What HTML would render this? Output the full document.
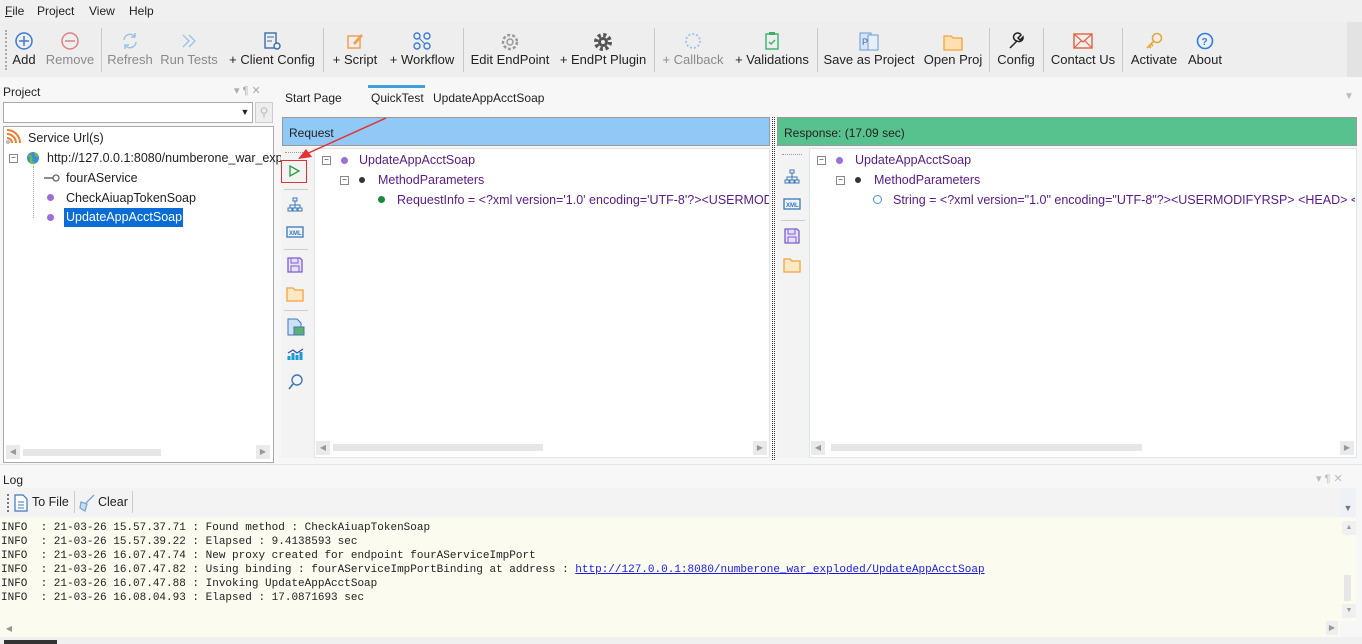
<!DOCTYPE html>
<html><head><meta charset="utf-8"><style>
*{box-sizing:border-box;margin:0;padding:0}
body{width:1362px;height:644px;overflow:hidden;background:#f7f7f7;font-family:"Liberation Sans",sans-serif;font-size:12px;color:#222;position:relative}
.a{position:absolute;white-space:nowrap}
.menu{left:0;top:0;width:1362px;height:22px;background:#f0f0f0}
.tb{left:0;top:22px;width:1347px;height:55px;background:#eeeeee}
.lbl{font-size:13px;top:52px;transform:translateX(-50%)}
.dis{color:#8a8a8a}
.sep{top:28px;width:1px;height:44px;background:#c8c8c8}
.ic{top:31px;transform:translateX(-50%)}
.mono{font-family:"Liberation Mono",monospace;font-size:11px;color:#222;white-space:pre}
.sb{background:#e6e6e6}
.arr{width:14px;height:14px;background:#eaeaea;color:#999;font-size:8px;text-align:center;line-height:14px}
.side-sep{height:1px;background:#ccc;width:24px}
</style></head><body>
<div class="a menu"></div>
<div class="a" style="left:5px;top:4px;font-size:12px"><u>F</u>ile</div>
<div class="a" style="left:37px;top:4px">Project</div>
<div class="a" style="left:89px;top:4px">View</div>
<div class="a" style="left:129px;top:4px">Help</div>

<div class="a tb"></div>
<div class="a" style="left:1347px;top:22px;width:15px;height:55px;background:#e3e3e3"></div>
<div class="a" style="left:5px;top:30px;width:2px;height:40px;border-left:2px dotted #aaa"></div>
<svg class="a ic" style="left:24px" width="20" height="20"><circle cx="10" cy="10" r="8" fill="none" stroke="#3a7bd5" stroke-width="1.5"/><path d="M10 5v10M5 10h10" stroke="#3a7bd5" stroke-width="1.5"/></svg>
<svg class="a ic" style="left:70px" width="20" height="20"><circle cx="10" cy="10" r="8" fill="none" stroke="#d9534f" stroke-width="1.5" opacity=".7"/><path d="M5 10h10" stroke="#d9534f" stroke-width="1.5" opacity=".7"/></svg>
<svg class="a ic" style="left:130px" width="20" height="20"><path d="M4 9a6 6 0 0 1 11-3M16 11a6 6 0 0 1-11 3M15 2v4h-4M5 18v-4h4" fill="none" stroke="#9cc1e8" stroke-width="1.5"/></svg>
<svg class="a ic" style="left:189px" width="20" height="20"><path d="M4 4l6 6-6 6M10 4l6 6-6 6" fill="none" stroke="#9cc1e8" stroke-width="1.4"/></svg>
<svg class="a ic" style="left:272px" width="20" height="20"><rect x="3" y="2" width="11" height="15" fill="none" stroke="#3b6ea5" stroke-width="1.4"/><path d="M5 6h7M5 10h5" stroke="#3b6ea5"/><circle cx="15" cy="15" r="3" fill="#eee" stroke="#3b6ea5" stroke-width="1.4"/></svg>
<svg class="a ic" style="left:355px" width="20" height="20"><rect x="3" y="5" width="12" height="12" fill="none" stroke="#f0a050" stroke-width="1.5"/><path d="M8 12l8-9 2 2-8 9z" fill="#f0a050"/></svg>
<svg class="a ic" style="left:422px" width="20" height="20"><circle cx="5" cy="5" r="3" fill="none" stroke="#3a7bd5" stroke-width="1.4"/><circle cx="15" cy="5" r="3" fill="none" stroke="#3a7bd5" stroke-width="1.4"/><circle cx="5" cy="15" r="3" fill="none" stroke="#3a7bd5" stroke-width="1.4"/><circle cx="15" cy="15" r="3" fill="none" stroke="#3a7bd5" stroke-width="1.4"/><path d="M7 7l6 6" stroke="#3a7bd5"/></svg>
<svg class="a ic" style="left:510px" width="22" height="22"><circle cx="11" cy="11" r="7" fill="none" stroke="#999" stroke-width="2.5" stroke-dasharray="3 2"/><circle cx="11" cy="11" r="3" fill="none" stroke="#999" stroke-width="1.5"/></svg>
<svg class="a ic" style="left:603px" width="22" height="22"><circle cx="11" cy="11" r="7" fill="none" stroke="#555" stroke-width="4" stroke-dasharray="3 2.5"/><circle cx="11" cy="11" r="5" fill="#555"/><circle cx="11" cy="11" r="2" fill="#eee"/></svg>
<svg class="a ic" style="left:693px" width="20" height="20"><circle cx="10" cy="10" r="7" fill="none" stroke="#9cc1e8" stroke-width="1.8" stroke-dasharray="2 2"/></svg>
<svg class="a ic" style="left:772px" width="20" height="20"><rect x="4" y="3" width="12" height="15" fill="none" stroke="#3cae6a" stroke-width="1.4"/><rect x="7" y="1" width="6" height="3" fill="#3cae6a"/><path d="M7 11l2 2 4-4" fill="none" stroke="#3cae6a" stroke-width="1.4"/></svg>
<svg class="a ic" style="left:869px" width="22" height="22"><rect x="2" y="2" width="11" height="17" fill="#d6e6f7" stroke="#6c9bd2"/><rect x="10" y="4" width="10" height="15" fill="#e6f0fa" stroke="#6c9bd2"/><text x="4" y="14" font-size="9" fill="#3a6bb5" font-family="Liberation Sans">P</text></svg>
<svg class="a ic" style="left:953px" width="22" height="22"><path d="M2 5h7l2 2h9v12H2z" fill="#fde0b0" stroke="#f5a23c" stroke-width="1.3"/></svg>
<svg class="a ic" style="left:1016px" width="20" height="20"><path d="M4 17l7-7M11 10a4 4 0 1 1 4 -6l-3 3 2 2 3-3a4 4 0 0 1-6 4z" fill="none" stroke="#222" stroke-width="1.5"/></svg>
<svg class="a ic" style="left:1083px" width="22" height="20"><rect x="2" y="3" width="18" height="14" fill="none" stroke="#e8603c" stroke-width="1.4"/><path d="M2 3l9 8 9-8M2 17l7-7M20 17l-7-7" fill="none" stroke="#e8603c" stroke-width="1.2"/></svg>
<svg class="a ic" style="left:1154px" width="20" height="20"><circle cx="13" cy="7" r="4.5" fill="none" stroke="#e6a63a" stroke-width="1.6"/><path d="M10 10l-7 7M5 15l2 2M7 13l2 2" stroke="#e6a63a" stroke-width="1.6"/></svg>
<svg class="a ic" style="left:1205px" width="20" height="20"><circle cx="10" cy="10" r="7.5" fill="none" stroke="#2b7de1" stroke-width="1.6"/><text x="6.5" y="14" font-size="10" font-weight="bold" fill="#2b7de1" font-family="Liberation Sans">?</text></svg>
<div class="a lbl" style="left:24px">Add</div>
<div class="a lbl dis" style="left:70px">Remove</div>
<div class="a sep" style="left:101px"></div>
<div class="a lbl dis" style="left:130px">Refresh</div>
<div class="a lbl dis" style="left:189px">Run Tests</div>
<div class="a lbl" style="left:272px">+ Client Config</div>
<div class="a sep" style="left:323px"></div>
<div class="a lbl" style="left:355px">+ Script</div>
<div class="a lbl" style="left:422px">+ Workflow</div>
<div class="a sep" style="left:463px"></div>
<div class="a lbl" style="left:510px">Edit EndPoint</div>
<div class="a lbl" style="left:603px">+ EndPt Plugin</div>
<div class="a sep" style="left:654px"></div>
<div class="a lbl dis" style="left:693px">+ Callback</div>
<div class="a lbl" style="left:772px">+ Validations</div>
<div class="a sep" style="left:817px"></div>
<div class="a lbl" style="left:869px">Save as Project</div>
<div class="a lbl" style="left:953px">Open Proj</div>
<div class="a sep" style="left:989px"></div>
<div class="a lbl" style="left:1016px">Config</div>
<div class="a sep" style="left:1043px"></div>
<div class="a lbl" style="left:1083px">Contact Us</div>
<div class="a sep" style="left:1122px"></div>
<div class="a lbl" style="left:1154px">Activate</div>
<div class="a lbl" style="left:1205px">About</div>

<div class="a" style="left:3px;top:85px;font-size:12px">Project</div>
<div class="a" style="left:234px;top:84px;color:#aaa;font-size:11px">▾ ¶ ✕</div>
<div class="a" style="left:3px;top:102px;width:250px;height:21px;background:#fff;border:1px solid #aaa"></div>
<div class="a" style="left:238px;top:103px;width:14px;height:19px;font-size:9px;line-height:19px;text-align:center">▼</div>
<div class="a" style="left:255px;top:102px;width:18px;height:21px;background:#eee;border:1px solid #ccc;color:#bbb;text-align:center;line-height:19px">⚲</div>
<div class="a" style="left:3px;top:126px;width:271px;height:337px;background:#fff;border:1px solid #aaa"></div>
<svg class="a" style="left:5px;top:129px" width="16" height="16"><path d="M2 9a5 5 0 0 1 5 5M2 5a9 9 0 0 1 9 9M2 1a13 13 0 0 1 13 13" fill="none" stroke="#f07d2a" stroke-width="2"/><circle cx="3" cy="13" r="2" fill="#bbb"/></svg>
<div class="a" style="left:28px;top:131px;font-size:12.5px">Service Url(s)</div>
<div class="a" style="left:9px;top:154px;width:9px;height:9px;border:1px solid #888;background:#fff;font-size:8px;line-height:6px;text-align:center">−</div>
<svg class="a" style="left:26px;top:151px" width="14" height="14"><circle cx="7" cy="7" r="6" fill="#3a8fd8"/><path d="M3 4q3 2 2 5t3 3M9 2q1 3 3 3" stroke="#6bbf3a" stroke-width="2.5" fill="none"/></svg>
<div class="a" style="left:47px;top:151px;font-size:12.5px">http://127.0.0.1:8080/numberone_war_expl</div>
<div class="a" style="left:33px;top:166px;width:1px;height:52px;border-left:1px dotted #aaa"></div>
<svg class="a" style="left:44px;top:173px" width="16" height="10"><path d="M0 5h10" stroke="#666" stroke-width="1.5"/><circle cx="12" cy="5" r="3" fill="#fff" stroke="#666" stroke-width="1.3"/></svg>
<div class="a" style="left:66px;top:171px;font-size:12.5px">fourAService</div>
<div class="a" style="left:47px;top:194px;width:7px;height:7px;border-radius:50%;background:#9b6fd8"></div>
<div class="a" style="left:66px;top:191px;font-size:12.5px">CheckAiuapTokenSoap</div>
<div class="a" style="left:47px;top:214px;width:7px;height:7px;border-radius:50%;background:#9b6fd8"></div>
<div class="a" style="left:64px;top:208px;width:119px;height:19px;background:#0a6cd6;color:#fff;font-size:12.5px;padding:2px 2px">UpdateAppAcctSoap</div>
<div class="a arr" style="left:6px;top:445px">◀</div>
<div class="a sb" style="left:23px;top:449px;width:138px;height:7px"></div>
<div class="a arr" style="left:256px;top:445px">▶</div>

<div class="a" style="left:285px;top:91px;font-size:12px">Start Page</div>
<div class="a" style="left:368px;top:85px;width:57px;height:3px;background:#3ea0d8"></div>
<div class="a" style="left:371px;top:91px;font-size:12px">QuickTest</div>
<div class="a" style="left:433px;top:91px;font-size:12px">UpdateAppAcctSoap</div>
<div class="a" style="left:1344px;top:91px;color:#bbb;font-size:10px">▼</div>

<div class="a" style="left:282px;top:117px;width:488px;height:29px;background:#90c8f6;border:1px solid #999;padding:8px 6px;font-size:12px">Request</div>
<div class="a" style="left:281px;top:147px;width:33px;height:311px;background:#f3f3f3"></div>
<div class="a" style="left:285px;top:152px;width:20px;border-top:1px dotted #999"></div>
<div class="a" style="left:281px;top:160px;width:26px;height:23px;border:1px solid #e03434"></div>
<svg class="a" style="left:287px;top:164px" width="14" height="14"><path d="M3 2l9 5-9 5z" fill="none" stroke="#28a03c" stroke-width="1.3"/></svg>
<div class="a side-sep" style="left:284px;top:189px"></div>
<svg class="a" style="left:287px;top:197px" width="16" height="16"><rect x="6" y="1" width="4" height="3" fill="none" stroke="#3b78b8"/><rect x="1" y="11" width="4" height="3" fill="none" stroke="#3b78b8"/><rect x="6" y="11" width="4" height="3" fill="none" stroke="#3b78b8"/><rect x="11" y="11" width="4" height="3" fill="none" stroke="#3b78b8"/><path d="M8 4v7M3 11V8h10v3" fill="none" stroke="#3b78b8"/></svg>
<svg class="a" style="left:286px;top:226px" width="18" height="12"><rect x="1" y="1" width="16" height="10" fill="#eef4fb" stroke="#3b78b8" stroke-width="1.3"/><text x="3" y="9" font-size="6" font-family="Liberation Sans" font-weight="bold" fill="#3b78b8">XML</text></svg>
<div class="a side-sep" style="left:284px;top:249px"></div>
<svg class="a" style="left:287px;top:257px" width="16" height="16"><path d="M1 1h12l2 2v12H1z" fill="#e8e0fa" stroke="#7a5fd0" stroke-width="1.3"/><rect x="4" y="1" width="7" height="5" fill="none" stroke="#7a5fd0"/><rect x="4" y="9" width="8" height="6" fill="none" stroke="#7a5fd0"/></svg>
<svg class="a" style="left:286px;top:286px" width="18" height="16"><path d="M1 2h6l2 2h8v11H1z" fill="#fde8c4" stroke="#f5a23c" stroke-width="1.3"/></svg>
<div class="a side-sep" style="left:284px;top:310px"></div>
<svg class="a" style="left:287px;top:318px" width="18" height="18"><path d="M1 1h9l4 4v12H1z" fill="#cde0f5" stroke="#3b78b8"/><rect x="7" y="9" width="10" height="8" fill="#5fb06f" stroke="#3b78b8"/></svg>
<svg class="a" style="left:287px;top:347px" width="18" height="14"><path d="M2 13V9M6 13V6M10 13V8M14 13V5" stroke="#1a9ad6" stroke-width="3"/><path d="M1 6l5-3 4 3 6-4" fill="none" stroke="#3a4fa8" stroke-width="1.3"/></svg>
<svg class="a" style="left:288px;top:374px" width="16" height="16"><circle cx="9" cy="6" r="5" fill="none" stroke="#3b78b8" stroke-width="1.4"/><path d="M5 10l-4 5" stroke="#3b78b8" stroke-width="1.6"/></svg>
<div class="a" style="left:314px;top:148px;width:456px;height:310px;background:#fff;border:1px solid #e4e4e4"></div>
<div class="a" style="left:322px;top:156px;width:9px;height:9px;border:1px solid #888;font-size:8px;line-height:6px;text-align:center">−</div>
<div class="a" style="left:341px;top:157px;width:7px;height:7px;border-radius:50%;background:#9b6fd8"></div>
<div class="a" style="left:359px;top:153px;color:#5a1a8a;font-size:12.5px">UpdateAppAcctSoap</div>
<div class="a" style="left:340px;top:176px;width:9px;height:9px;border:1px solid #888;font-size:8px;line-height:6px;text-align:center">−</div>
<div class="a" style="left:359px;top:177px;width:6px;height:6px;border-radius:50%;background:#333"></div>
<div class="a" style="left:378px;top:173px;color:#5a1a8a;font-size:12.5px">MethodParameters</div>
<div class="a" style="left:378px;top:196px;width:7px;height:7px;border-radius:50%;background:#1a8a3a"></div>
<div class="a" style="left:397px;top:193px;width:372px;overflow:hidden;color:#5a1a8a;font-size:12.5px">RequestInfo = &lt;?xml version='1.0' encoding='UTF-8'?&gt;&lt;USERMODIFY</div>
<div class="a arr" style="left:316px;top:441px">◀</div>
<div class="a sb" style="left:333px;top:444px;width:210px;height:7px"></div>
<div class="a arr" style="left:753px;top:441px">▶</div>
<svg class="a" style="left:290px;top:115px" width="110" height="50"><path d="M96 3L14 40" stroke="#e83030" stroke-width="1.5"/><path d="M8 44l14-2-6-8z" fill="#e83030"/></svg>
<div class="a" style="left:772px;top:117px;width:3px;height:343px;border-left:1px dotted #333;border-right:1px dotted #333"></div>

<div class="a" style="left:777px;top:117px;width:580px;height:29px;background:#58c28e;border:1px solid #999;padding:8px 6px;font-size:12px">Response: (17.09 sec)</div>
<div class="a" style="left:777px;top:147px;width:32px;height:311px;background:#f3f3f3"></div>
<div class="a" style="left:782px;top:154px;width:20px;border-top:1px dotted #999"></div>
<svg class="a" style="left:784px;top:169px" width="16" height="16"><rect x="6" y="1" width="4" height="3" fill="none" stroke="#3b78b8"/><rect x="1" y="11" width="4" height="3" fill="none" stroke="#3b78b8"/><rect x="6" y="11" width="4" height="3" fill="none" stroke="#3b78b8"/><rect x="11" y="11" width="4" height="3" fill="none" stroke="#3b78b8"/><path d="M8 4v7M3 11V8h10v3" fill="none" stroke="#3b78b8"/></svg>
<svg class="a" style="left:783px;top:198px" width="18" height="12"><rect x="1" y="1" width="16" height="10" fill="#eef4fb" stroke="#3b78b8" stroke-width="1.3"/><text x="3" y="9" font-size="6" font-family="Liberation Sans" font-weight="bold" fill="#3b78b8">XML</text></svg>
<div class="a side-sep" style="left:781px;top:220px"></div>
<svg class="a" style="left:784px;top:228px" width="16" height="16"><path d="M1 1h12l2 2v12H1z" fill="#e8e0fa" stroke="#7a5fd0" stroke-width="1.3"/><rect x="4" y="1" width="7" height="5" fill="none" stroke="#7a5fd0"/><rect x="4" y="9" width="8" height="6" fill="none" stroke="#7a5fd0"/></svg>
<svg class="a" style="left:783px;top:257px" width="18" height="16"><path d="M1 2h6l2 2h8v11H1z" fill="#fde8c4" stroke="#f5a23c" stroke-width="1.3"/></svg>
<div class="a" style="left:809px;top:148px;width:548px;height:310px;background:#fff;border:1px solid #dde6ee"></div>
<div class="a" style="left:817px;top:156px;width:9px;height:9px;border:1px solid #888;font-size:8px;line-height:6px;text-align:center">−</div>
<div class="a" style="left:836px;top:157px;width:7px;height:7px;border-radius:50%;background:#9b6fd8"></div>
<div class="a" style="left:855px;top:153px;color:#5a1a8a;font-size:12.5px">UpdateAppAcctSoap</div>
<div class="a" style="left:836px;top:176px;width:9px;height:9px;border:1px solid #888;font-size:8px;line-height:6px;text-align:center">−</div>
<div class="a" style="left:855px;top:177px;width:6px;height:6px;border-radius:50%;background:#333"></div>
<div class="a" style="left:874px;top:173px;color:#5a1a8a;font-size:12.5px">MethodParameters</div>
<div class="a" style="left:873px;top:195px;width:9px;height:9px;border-radius:50%;border:1.3px solid #4a90d8"></div>
<div class="a" style="left:893px;top:193px;width:462px;overflow:hidden;color:#5a1a8a;font-size:12.5px">String = &lt;?xml version="1.0" encoding="UTF-8"?&gt;&lt;USERMODIFYRSP&gt; &lt;HEAD&gt; &lt;CODE&gt;</div>
<div class="a arr" style="left:811px;top:441px">◀</div>
<div class="a sb" style="left:831px;top:444px;width:311px;height:7px"></div>
<div class="a arr" style="left:1340px;top:441px">▶</div>

<div class="a" style="left:0;top:464px;width:1362px;height:1px;background:#e4e4e4"></div>
<div class="a" style="left:3px;top:473px;font-size:12px">Log</div>
<div class="a" style="left:1316px;top:472px;color:#bbb;font-size:11px">▾ ¶ ✕</div>
<div class="a" style="left:0;top:488px;width:1340px;height:29px;background:#f3f3f3"></div>
<div class="a" style="left:1340px;top:488px;width:16px;height:29px;background:#eef2f8;color:#777;font-size:9px;text-align:center;padding-top:15px">▼</div>
<div class="a" style="left:7px;top:494px;height:18px;border-left:2px dotted #777"></div>
<svg class="a" style="left:14px;top:494px" width="14" height="18"><path d="M1 1h8l4 4v12H1z" fill="#fff" stroke="#3b78b8" stroke-width="1.2"/><path d="M4 8h6M4 11h6M4 14h6" stroke="#3b78b8"/></svg>
<div class="a" style="left:32px;top:495px;font-size:12.5px">To File</div>
<div class="a" style="left:74px;top:491px;width:1px;height:22px;background:#ccc"></div>
<svg class="a" style="left:78px;top:494px" width="18" height="18"><path d="M16 1L8 9M3 8l6 2-2 7-5-3z" fill="#c8dcef" stroke="#7aa6d0" stroke-width="1.3"/></svg>
<div class="a" style="left:98px;top:495px;font-size:12.5px">Clear</div>
<div class="a" style="left:132px;top:491px;width:1px;height:22px;background:#ccc"></div>
<div class="a" style="left:0;top:518px;width:1340px;height:103px;background:#fbfbf0;overflow:hidden"></div>
<div class="a mono" style="left:1px;top:521px;line-height:14px">INFO  : 21-03-26 15.57.37.71 : Found method : CheckAiuapTokenSoap
INFO  : 21-03-26 15.57.39.22 : Elapsed : 9.4138593 sec
INFO  : 21-03-26 16.07.47.74 : New proxy created for endpoint fourAServiceImpPort
INFO  : 21-03-26 16.07.47.82 : Using binding : fourAServiceImpPortBinding at address : <span style="color:#1a1aee;text-decoration:underline">http://127.0.0.1:8080/numberone_war_exploded/UpdateAppAcctSoap</span>
INFO  : 21-03-26 16.07.47.88 : Invoking UpdateAppAcctSoap
INFO  : 21-03-26 16.08.04.93 : Elapsed : 17.0871693 sec</div>
<div class="a" style="left:1340px;top:518px;width:16px;height:103px;background:#fbfbf0"></div>
<div class="a arr" style="left:1342px;top:521px;font-size:7px;background:#f0f0f0">▲</div>
<div class="a sb" style="left:1344px;top:575px;width:7px;height:26px"></div>
<div class="a arr" style="left:1342px;top:604px;font-size:7px;background:#f0f0f0">▼</div>
<div class="a" style="left:0;top:621px;width:1340px;height:16px;background:#fbfbf0"></div>
<div class="a arr" style="left:2px;top:622px;background:#fbfbf0">◀</div>
<div class="a arr" style="left:1326px;top:621px;width:12px;background:#eee">▶</div>
<div class="a" style="left:0;top:637px;width:1362px;height:7px;background:#f0f0f0"></div>
<div class="a" style="left:4px;top:640px;width:53px;height:4px;background:#333"></div>
</body></html>
